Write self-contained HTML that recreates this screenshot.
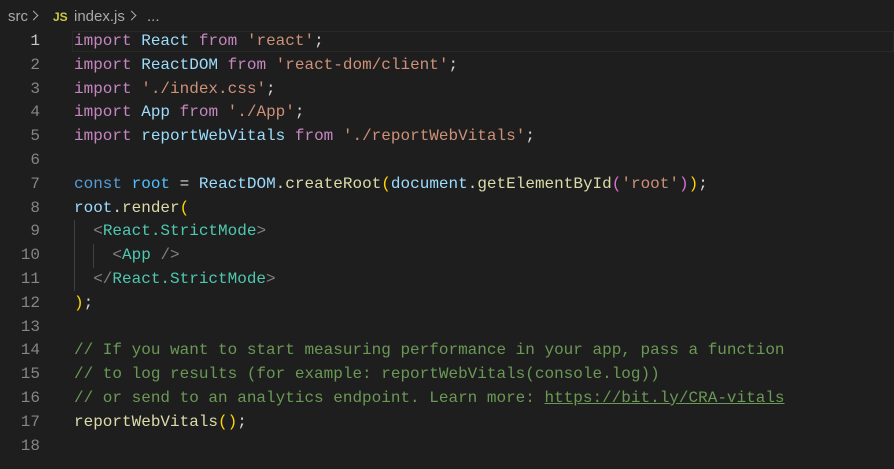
<!DOCTYPE html>
<html><head><meta charset="utf-8"><style>
html,body{margin:0;padding:0;background:#1e1e1e;width:894px;height:469px;overflow:hidden}
.bc{position:absolute;top:6px;height:22px;font:15px "Liberation Sans",sans-serif;color:#a9a9a9;white-space:pre;line-height:22px}
.js{color:#cbcb41;font-weight:bold;font-size:12px}
.chev{position:absolute;top:12px;width:6px;height:6px;border-right:1.3px solid #aaa;border-top:1.3px solid #aaa;transform:rotate(45deg)}
.code{position:absolute;left:0;top:30px;font:16px "Liberation Mono",monospace}
.ln{height:23.8px;line-height:23.8px;position:relative;white-space:pre}
.n{position:absolute;left:0;width:40px;text-align:right;color:#858585}
.t{position:absolute;left:74px;white-space:pre}
.cur{position:absolute;left:72px;width:822px;top:1px;height:21px;border:1px solid #282828;box-sizing:border-box}
.g{position:absolute;width:1px;background:#404040}
.k{color:#c586c0}.v{color:#9cdcfe}.s{color:#ce9178}.f{color:#dcdcaa}.c{color:#569cd6}.tg{color:#4ec9b0}.p{color:#808080}.cm{color:#6a9955}.y{color:#ffd700}.pu{color:#da70d6}.w{color:#d4d4d4}.bl{color:#4fc1ff}
</style></head><body>
<div class="bc" style="left:8px">src</div>
<div class="chev" style="left:30px"></div>
<div class="bc js" style="left:53px">JS</div>
<div class="bc" style="left:74px">index.js</div>
<div class="chev" style="left:128px"></div>
<div class="bc" style="left:147px">...</div>
<div class="code"><div class="g" style="left:74px;top:190px;height:71px"></div><div class="g" style="left:93px;top:214px;height:24px"></div><div class="ln"><div class="cur"></div><span class="n" style="color:#c6c6c6">1</span><span class="t"><span class="k">import</span> <span class="v">React</span> <span class="k">from</span> <span class="s">'react'</span><span class="w">;</span></span></div><div class="ln"><span class="n">2</span><span class="t"><span class="k">import</span> <span class="v">ReactDOM</span> <span class="k">from</span> <span class="s">'react-dom/client'</span><span class="w">;</span></span></div><div class="ln"><span class="n">3</span><span class="t"><span class="k">import</span> <span class="s">'./index.css'</span><span class="w">;</span></span></div><div class="ln"><span class="n">4</span><span class="t"><span class="k">import</span> <span class="v">App</span> <span class="k">from</span> <span class="s">'./App'</span><span class="w">;</span></span></div><div class="ln"><span class="n">5</span><span class="t"><span class="k">import</span> <span class="v">reportWebVitals</span> <span class="k">from</span> <span class="s">'./reportWebVitals'</span><span class="w">;</span></span></div><div class="ln"><span class="n">6</span></div><div class="ln"><span class="n">7</span><span class="t"><span class="c">const</span> <span class="bl">root</span> <span class="w">=</span> <span class="v">ReactDOM</span><span class="w">.</span><span class="f">createRoot</span><span class="y">(</span><span class="v">document</span><span class="w">.</span><span class="f">getElementById</span><span class="pu">(</span><span class="s">'root'</span><span class="pu">)</span><span class="y">)</span><span class="w">;</span></span></div><div class="ln"><span class="n">8</span><span class="t"><span class="v">root</span><span class="w">.</span><span class="f">render</span><span class="y">(</span></span></div><div class="ln"><span class="n">9</span><span class="t">  <span class="p">&lt;</span><span class="tg">React.StrictMode</span><span class="p">&gt;</span></span></div><div class="ln"><span class="n">10</span><span class="t">    <span class="p">&lt;</span><span class="tg">App</span> <span class="p">/&gt;</span></span></div><div class="ln"><span class="n">11</span><span class="t">  <span class="p">&lt;/</span><span class="tg">React.StrictMode</span><span class="p">&gt;</span></span></div><div class="ln"><span class="n">12</span><span class="t"><span class="y">)</span><span class="w">;</span></span></div><div class="ln"><span class="n">13</span></div><div class="ln"><span class="n">14</span><span class="t cm">// If you want to start measuring performance in your app, pass a function</span></div><div class="ln"><span class="n">15</span><span class="t cm">// to log results (for example: reportWebVitals(console.log))</span></div><div class="ln"><span class="n">16</span><span class="t cm">// or send to an analytics endpoint. Learn more: <u>https://bit.ly/CRA-vitals</u></span></div><div class="ln"><span class="n">17</span><span class="t"><span class="f">reportWebVitals</span><span class="y">()</span><span class="w">;</span></span></div><div class="ln"><span class="n">18</span></div></div>
</body></html>
